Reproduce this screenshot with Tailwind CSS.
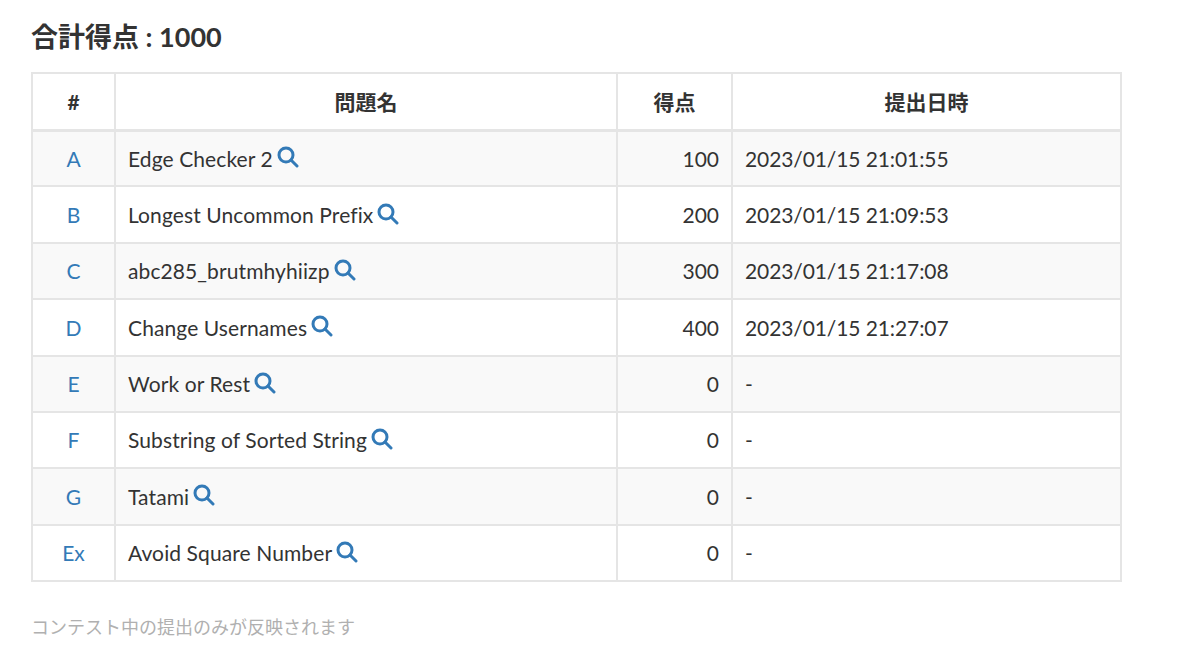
<!DOCTYPE html>
<html lang="ja">
<head>
    <meta charset="UTF-8">
    <title>合計得点</title>
    <script src="https://cdn.jsdelivr.net/npm/@tailwindcss/browser@4"></script>
</head>
<body class="bg-white text-[#333] font-['Lato','Noto_Sans_CJK_JP',sans-serif] text-[21px] overflow-hidden">
    <div class="w-[1200px] h-[660px] pl-[31px] pt-[20px]">
        <h3 class="text-[27px] font-bold leading-[34px] mb-[18px]">合計得点 : 1000</h3>

        <table class="w-[1091px] table-fixed border-collapse border-2 border-[#e5e5e5]">
            <thead>
                <tr class="h-[57px] border-b-[3px] border-[#e2e2e2]">
                    <th class="w-[83px] border-2 border-[#e5e5e5] border-b-[3px] font-bold text-[21px] text-center">#</th>
                    <th class="w-[502px] border-2 border-[#e5e5e5] border-b-[3px] font-bold text-[21px] text-center">問題名</th>
                    <th class="w-[115px] border-2 border-[#e5e5e5] border-b-[3px] font-bold text-[21px] text-center">得点</th>
                    <th class="border-2 border-[#e5e5e5] border-b-[3px] font-bold text-[21px] text-center">提出日時</th>
                </tr>
            </thead>
            <tbody>
                <tr class="h-[56.375px] bg-[#f9f9f9]">
                    <td class="border-2 border-[#e5e5e5] text-center text-[#337ab7]">A</td>
                    <td class="border-2 border-[#e5e5e5] px-[12px]"><span class="inline-flex items-center gap-[4px] tracking-[0.1px]">Edge Checker 2<svg class="w-[22px] h-[22px] -mt-[2px]" viewBox="0 0 22 22" fill="none" stroke="#337ab7" stroke-width="3"><circle cx="9" cy="9" r="7"/><path d="M14 14l6 6" stroke-linecap="round"/></svg></span></td>
                    <td class="border-2 border-[#e5e5e5] px-[12px] text-right">100</td>
                    <td class="border-2 border-[#e5e5e5] px-[12px] tracking-[-0.1px]">2023/01/15 21:01:55</td>
                </tr>
                <tr class="h-[56.375px]">
                    <td class="border-2 border-[#e5e5e5] text-center text-[#337ab7]">B</td>
                    <td class="border-2 border-[#e5e5e5] px-[12px]"><span class="inline-flex items-center gap-[4px] tracking-[0.1px]">Longest Uncommon Prefix<svg class="w-[22px] h-[22px] -mt-[2px]" viewBox="0 0 22 22" fill="none" stroke="#337ab7" stroke-width="3"><circle cx="9" cy="9" r="7"/><path d="M14 14l6 6" stroke-linecap="round"/></svg></span></td>
                    <td class="border-2 border-[#e5e5e5] px-[12px] text-right">200</td>
                    <td class="border-2 border-[#e5e5e5] px-[12px] tracking-[-0.1px]">2023/01/15 21:09:53</td>
                </tr>
                <tr class="h-[56.375px] bg-[#f9f9f9]">
                    <td class="border-2 border-[#e5e5e5] text-center text-[#337ab7]">C</td>
                    <td class="border-2 border-[#e5e5e5] px-[12px]"><span class="inline-flex items-center gap-[4px] tracking-[0.1px]">abc285_brutmhyhiizp<svg class="w-[22px] h-[22px] -mt-[2px]" viewBox="0 0 22 22" fill="none" stroke="#337ab7" stroke-width="3"><circle cx="9" cy="9" r="7"/><path d="M14 14l6 6" stroke-linecap="round"/></svg></span></td>
                    <td class="border-2 border-[#e5e5e5] px-[12px] text-right">300</td>
                    <td class="border-2 border-[#e5e5e5] px-[12px] tracking-[-0.1px]">2023/01/15 21:17:08</td>
                </tr>
                <tr class="h-[56.375px]">
                    <td class="border-2 border-[#e5e5e5] text-center text-[#337ab7]">D</td>
                    <td class="border-2 border-[#e5e5e5] px-[12px]"><span class="inline-flex items-center gap-[4px] tracking-[0.1px]">Change Usernames<svg class="w-[22px] h-[22px] -mt-[2px]" viewBox="0 0 22 22" fill="none" stroke="#337ab7" stroke-width="3"><circle cx="9" cy="9" r="7"/><path d="M14 14l6 6" stroke-linecap="round"/></svg></span></td>
                    <td class="border-2 border-[#e5e5e5] px-[12px] text-right">400</td>
                    <td class="border-2 border-[#e5e5e5] px-[12px] tracking-[-0.1px]">2023/01/15 21:27:07</td>
                </tr>
                <tr class="h-[56.375px] bg-[#f9f9f9]">
                    <td class="border-2 border-[#e5e5e5] text-center text-[#337ab7]">E</td>
                    <td class="border-2 border-[#e5e5e5] px-[12px]"><span class="inline-flex items-center gap-[4px] tracking-[0.1px]">Work or Rest<svg class="w-[22px] h-[22px] -mt-[2px]" viewBox="0 0 22 22" fill="none" stroke="#337ab7" stroke-width="3"><circle cx="9" cy="9" r="7"/><path d="M14 14l6 6" stroke-linecap="round"/></svg></span></td>
                    <td class="border-2 border-[#e5e5e5] px-[12px] text-right">0</td>
                    <td class="border-2 border-[#e5e5e5] px-[12px]">-</td>
                </tr>
                <tr class="h-[56.375px]">
                    <td class="border-2 border-[#e5e5e5] text-center text-[#337ab7]">F</td>
                    <td class="border-2 border-[#e5e5e5] px-[12px]"><span class="inline-flex items-center gap-[4px] tracking-[0.1px]">Substring of Sorted String<svg class="w-[22px] h-[22px] -mt-[2px]" viewBox="0 0 22 22" fill="none" stroke="#337ab7" stroke-width="3"><circle cx="9" cy="9" r="7"/><path d="M14 14l6 6" stroke-linecap="round"/></svg></span></td>
                    <td class="border-2 border-[#e5e5e5] px-[12px] text-right">0</td>
                    <td class="border-2 border-[#e5e5e5] px-[12px]">-</td>
                </tr>
                <tr class="h-[56.375px] bg-[#f9f9f9]">
                    <td class="border-2 border-[#e5e5e5] text-center text-[#337ab7]">G</td>
                    <td class="border-2 border-[#e5e5e5] px-[12px]"><span class="inline-flex items-center gap-[4px] tracking-[0.1px]">Tatami<svg class="w-[22px] h-[22px] -mt-[2px]" viewBox="0 0 22 22" fill="none" stroke="#337ab7" stroke-width="3"><circle cx="9" cy="9" r="7"/><path d="M14 14l6 6" stroke-linecap="round"/></svg></span></td>
                    <td class="border-2 border-[#e5e5e5] px-[12px] text-right">0</td>
                    <td class="border-2 border-[#e5e5e5] px-[12px]">-</td>
                </tr>
                <tr class="h-[56.375px]">
                    <td class="border-2 border-[#e5e5e5] text-center text-[#337ab7]">Ex</td>
                    <td class="border-2 border-[#e5e5e5] px-[12px]"><span class="inline-flex items-center gap-[4px] tracking-[0.1px]">Avoid Square Number<svg class="w-[22px] h-[22px] -mt-[2px]" viewBox="0 0 22 22" fill="none" stroke="#337ab7" stroke-width="3"><circle cx="9" cy="9" r="7"/><path d="M14 14l6 6" stroke-linecap="round"/></svg></span></td>
                    <td class="border-2 border-[#e5e5e5] px-[12px] text-right">0</td>
                    <td class="border-2 border-[#e5e5e5] px-[12px]">-</td>
                </tr>
            </tbody>
        </table>

        <p class="mt-[31px] text-[18px] leading-[28px] text-[#b0b0b0]">コンテスト中の提出のみが反映されます</p>
    </div>
</body>
</html>
